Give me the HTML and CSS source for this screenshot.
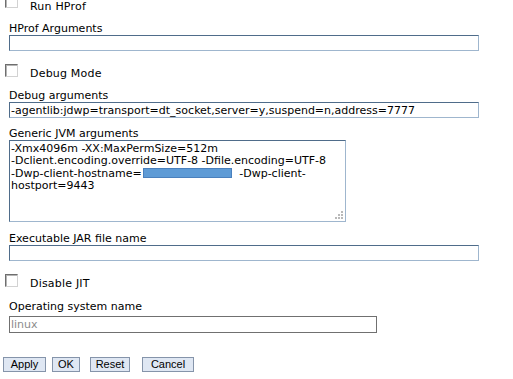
FILE: index.html
```html
<!DOCTYPE html>
<html lang="en">
<head>
<meta charset="utf-8">
<title>JVM settings</title>
<link rel="stylesheet" href="styles.css">
</head>
<body>
<form class="form">
  <div class="check-row first">
    <input type="checkbox" class="cb" id="hprof">
    <label class="cb-label" for="hprof">Run HProf</label>
  </div>

  <div class="field">
    <label class="label" for="hprofargs">HProf Arguments</label>
    <input type="text" class="input wide" id="hprofargs" value="">
  </div>

  <div class="check-row">
    <input type="checkbox" class="cb" id="debug">
    <label class="cb-label" for="debug">Debug Mode</label>
  </div>

  <div class="field">
    <label class="label" for="debugargs">Debug arguments</label>
    <input type="text" class="input wide" id="debugargs" value="-agentlib:jdwp=transport=dt_socket,server=y,suspend=n,address=7777">
  </div>

  <div class="field">
    <div class="label">Generic JVM arguments</div>
    <div class="textarea">
      <div class="line">-Xmx4096m -XX:MaxPermSize=512m</div>
      <div class="line">-Dclient.encoding.override=UTF-8 -Dfile.encoding=UTF-8</div>
      <div class="line">-Dwp-client-hostname=<span class="redact"></span> -Dwp-client-</div>
      <div class="line">hostport=9443</div>
      <svg class="grip" width="11" height="11" viewBox="0 0 11 11" aria-hidden="true">
        <rect x="8" y="2" width="2" height="2" fill="#b9b9b9"/>
        <rect x="5" y="5" width="2" height="2" fill="#b9b9b9"/>
        <rect x="8" y="5" width="2" height="2" fill="#b9b9b9"/>
        <rect x="2" y="8" width="2" height="2" fill="#b9b9b9"/>
        <rect x="5" y="8" width="2" height="2" fill="#b9b9b9"/>
        <rect x="8" y="8" width="2" height="2" fill="#b9b9b9"/>
      </svg>
    </div>
  </div>

  <div class="field jar">
    <label class="label" for="jar">Executable JAR file name</label>
    <input type="text" class="input wide" id="jar" value="">
  </div>

  <div class="check-row jit">
    <input type="checkbox" class="cb" id="jit">
    <label class="cb-label" for="jit">Disable JIT</label>
  </div>

  <div class="field os">
    <label class="label" for="osname">Operating system name</label>
    <input type="text" class="input os-input" id="osname" value="linux" disabled>
  </div>

  <div class="buttons">
    <button type="button" class="btn btn-apply">Apply</button>
    <button type="button" class="btn btn-ok">OK</button>
    <button type="button" class="btn btn-reset">Reset</button>
    <button type="button" class="btn btn-cancel">Cancel</button>
  </div>
</form>
</body>
</html>
```

FILE: styles.css
```css
html, body {
  margin: 0;
  padding: 0;
  background: #ffffff;
  overflow: hidden;
}

body {
  font-family: "DejaVu Sans", Verdana, sans-serif;
  font-size: 11px;
  color: #000000;
}

.form {
  display: flex;
  flex-direction: column;
  align-items: flex-start;
  margin: -5px 0 0 0;
}

/* checkbox rows */
.check-row {
  display: flex;
  align-items: flex-start;
  margin-left: 5px;
  margin-top: 13px;
}

.check-row.first {
  margin-top: 0;
}

.check-row.first .cb-label {
  margin-top: 6px;
}

.check-row.jit {
  margin-top: 13px;
}

.cb {
  appearance: none;
  -webkit-appearance: none;
  box-sizing: border-box;
  width: 13px;
  height: 13px;
  margin: 0;
  background: #ffffff;
  border: 1px solid;
  border-color: #6e6e6e #d2d2d2 #d2d2d2 #6e6e6e;
  box-shadow: inset 1px 1px 0 #b4b4b4;
}

.cb-label {
  margin-left: 12px;
  margin-top: 4px;
  line-height: 12px;
  letter-spacing: 0.2px;
}

/* labelled fields */
.field {
  display: flex;
  flex-direction: column;
  align-items: flex-start;
  margin-left: 9px;
  margin-top: 10px;
}

.field.jar {
  margin-top: 11px;
}

.label {
  line-height: 12px;
}

.input {
  box-sizing: border-box;
  height: 16px;
  margin: 0;
  padding: 0 1px;
  font-family: "DejaVu Sans", Verdana, sans-serif;
  font-size: 11px;
  color: #000000;
  background: #ffffff;
  border: 1px solid;
  border-color: #4f6c8a #9fb6ce #9fb6ce #4f6c8a;
  border-radius: 0;
  outline: none;
}

.input.wide {
  width: 470px;
}

.field.os {
  margin-top: 11px;
}

.field.os .label {
  margin-bottom: 3px;
}

.input.os-input {
  width: 368px;
  height: 17px;
  color: #8c8c8c;
  border-color: #707070;
  background: #ffffff;
}

/* pseudo textarea */
.textarea {
  position: relative;
  box-sizing: border-box;
  width: 337px;
  height: 82px;
  padding: 2px 1px;
  line-height: 12.3px;
  background: #ffffff;
  border: 1px solid;
  border-color: #4f6c8a #9fb6ce #9fb6ce #4f6c8a;
}

.line {
  white-space: nowrap;
}

.redact {
  display: inline-block;
  box-sizing: border-box;
  width: 89px;
  height: 10px;
  vertical-align: -1px;
  margin-left: 1px;
  margin-right: 4px;
  background: #5e9bd6;
  border: 1px solid #4a80bd;
}

.grip {
  position: absolute;
  right: 1px;
  bottom: 1px;
}

/* buttons */
.buttons {
  display: flex;
  margin-left: 3px;
  margin-top: 24px;
}

.btn {
  box-sizing: border-box;
  height: 15px;
  margin: 0;
  padding: 0;
  font-family: "Liberation Sans", Arial, sans-serif;
  font-size: 11px;
  line-height: 13px;
  color: #000000;
  background: #dfe7f3;
  border: 1px solid #8594aa;
  border-radius: 0;
}

.btn-apply { width: 43px; }
.btn-ok { width: 28px; margin-left: 6px; }
.btn-reset { width: 40px; margin-left: 10px; }
.btn-cancel { width: 52px; margin-left: 12px; }
```
